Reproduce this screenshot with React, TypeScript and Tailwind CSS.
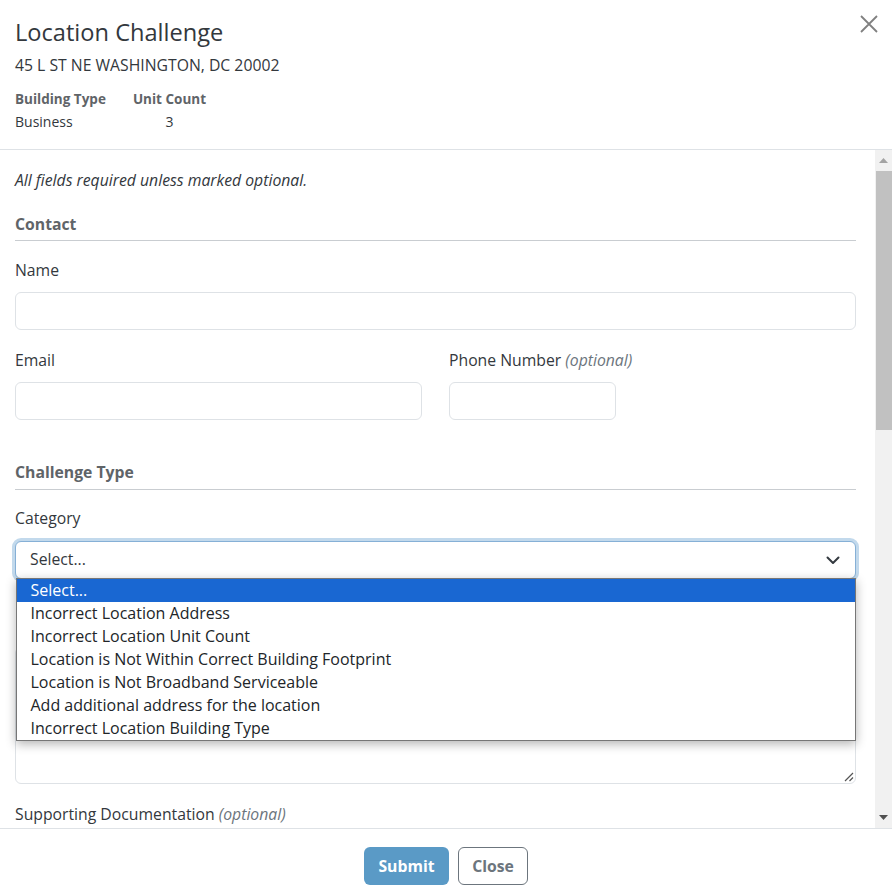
const options = [
  "Incorrect Location Address",
  "Incorrect Location Unit Count",
  "Location is Not Within Correct Building Footprint",
  "Location is Not Broadband Serviceable",
  "Add additional address for the location",
  "Incorrect Location Building Type",
];

const inputClass = "block h-[38px] rounded-md border border-[#dee2e6] bg-white";

const Optional = () => <em className="text-[#6c757d]">(optional)</em>;

export default function App() {
  return (
    <div className="flex h-[891px] w-[892px] flex-col overflow-hidden bg-white font-['Open_Sans',sans-serif] text-[15.75px] text-[#212529]">
      {/* Header */}
      <header className="relative h-[150px] shrink-0 border-b border-[#dee2e6] px-[15px] pt-[15px]">
        <h1 className="text-[23.625px] leading-[34px] text-[#33383d]">Location Challenge</h1>
        <p className="mt-[3px] leading-[26px] text-[#33383d]">45 L ST NE WASHINGTON, DC 20002</p>
        <div className="mt-[10px] flex gap-[27px] leading-[23px]">
          <div>
            <div className="text-[13.5px] font-bold text-[#5f6468]">Building Type</div>
            <div className="text-[14px] leading-[22px] text-[#33383d]">Business</div>
          </div>
          <div>
            <div className="text-[13.5px] font-bold text-[#5f6468]">Unit Count</div>
            <div className="text-center text-[14px] leading-[22px] text-[#33383d]">3</div>
          </div>
        </div>
        <button className="absolute top-[15px] right-[14px] text-[#808080]" aria-label="Close">
          <svg width="18" height="18" viewBox="0 0 18 18" fill="none" stroke="currentColor" strokeWidth="1.8">
            <path d="M1 1l16 16M17 1L1 17" />
          </svg>
        </button>
      </header>

      {/* Body */}
      <div className="flex min-h-0 flex-1">
        <div className="min-w-0 flex-1 overflow-hidden pr-[19px] pl-[15px]">
          <p className="mt-[19px] leading-[22px] text-[#33383d] italic">All fields required unless marked optional.</p>

          <h3 className="mt-[22px] border-b border-[#c9cdd1] pb-[5px] leading-[22px] font-bold text-[#5f6468]">Contact</h3>
          <label className="mt-[17px] block leading-[24px] text-[#33383d]">Name</label>
          <input className={`${inputClass} mt-[10px] w-full`} />

          <div className="mt-[18px] flex gap-[27px]">
            <div className="w-[407px]">
              <label className="block leading-[24px] text-[#33383d]">Email</label>
              <input className={`${inputClass} mt-[10px] w-full`} />
            </div>
            <div>
              <label className="block leading-[24px] text-[#33383d]">
                Phone Number <Optional />
              </label>
              <input className={`${inputClass} mt-[10px] w-[167px]`} />
            </div>
          </div>

          <h3 className="mt-[41px] border-b border-[#c9cdd1] pb-[6px] leading-[22px] font-bold text-[#5f6468]">Challenge Type</h3>
          <label className="mt-[16px] block leading-[24px] text-[#33383d]">Category</label>

          <div className="relative mt-[11px]">
            <div className="flex h-[38px] items-center justify-between rounded-md border border-[#86b0d6] bg-white pr-[14px] pl-[14px] text-[#33383d] shadow-[0_0_0_3px_#c2d9ec]">
              Select...
              <svg width="16" height="16" viewBox="0 0 16 16" fill="none" stroke="#343a40" strokeWidth="2" strokeLinecap="round" strokeLinejoin="round">
                <path d="M2.500 5.500L8 11l5.500-5.500" />
              </svg>
            </div>

            {/* Native-looking option list */}
            <ul className="absolute top-[37px] right-0 left-px z-10 h-[163px] border border-[#767676] bg-white text-base leading-[23px] text-[#212529] shadow-[0_3px_10px_rgba(0,0,0,0.3)]">
              <li className="bg-[#1967d2] pl-[13.500px] text-white">Select...</li>
              {options.map((option) => (
                <li key={option} className="pl-[13.500px]">
                  {option}
                </li>
              ))}
            </ul>
          </div>

          <div className="relative mt-[68px]">
            <textarea className="block h-[137px] w-full resize-none rounded-md border border-[#dee2e6] bg-white" />
            <svg className="absolute right-[2px] bottom-[2px]" width="10" height="10" viewBox="0 0 10 10" stroke="#555" strokeWidth="1.2">
              <path d="M1 9L9 1M5.500 9L9 5.500" />
            </svg>
          </div>

          <label className="mt-[18px] block leading-[24px] text-[#33383d]">
            Supporting Documentation <Optional />
          </label>
        </div>

        {/* Scrollbar */}
        <div className="flex w-[17px] shrink-0 flex-col bg-[#f1f1f1]">
          <div className="flex h-[21px] items-center justify-center">
            <svg width="9" height="5" viewBox="0 0 9 5" fill="#a3a3a3"><path d="M4.500 0L9 5H0z" /></svg>
          </div>
          <div className="ml-[1px] h-[259px] bg-[#c1c1c1]" />
          <div className="mt-auto flex h-[21px] items-center justify-center">
            <svg width="9" height="5" viewBox="0 0 9 5" fill="#505050"><path d="M0 0h9L4.500 5z" /></svg>
          </div>
        </div>
      </div>

      {/* Footer */}
      <footer className="flex h-[63px] shrink-0 items-start justify-center gap-[9px] border-t border-[#dee2e6] pt-[18px]">
        <button className="h-[38px] w-[85px] rounded-md bg-[#5a9ac6] pt-[1px] font-bold text-white">Submit</button>
        <button className="h-[38px] w-[70px] rounded-md border border-[#6c757d] bg-white pt-[1px] font-bold text-[#6c757d]">Close</button>
      </footer>
    </div>
  );
}
